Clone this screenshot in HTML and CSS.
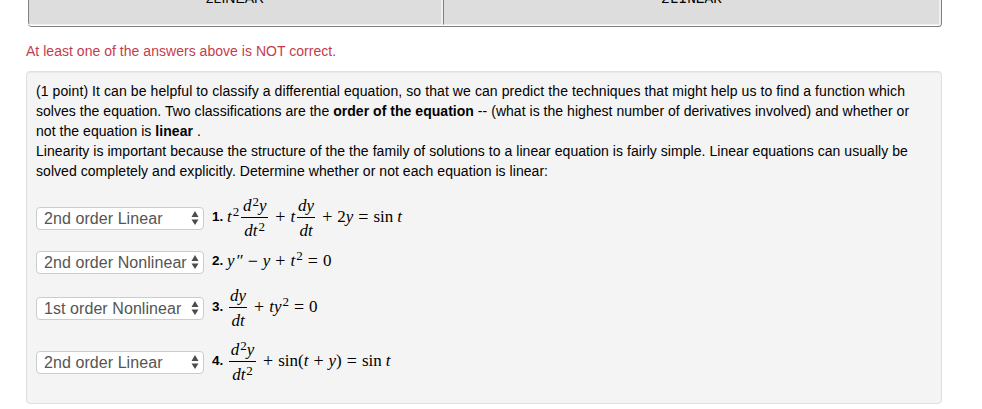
FILE: index.html
```html
<!DOCTYPE html>
<html lang="en">

<head>
    <meta charset="UTF-8">
    <meta name="viewport" content="width=device-width, initial-scale=1.0">
    <title>Classifying Differential Equations</title>
    <link rel="stylesheet" href="styles.css">
</head>

<body>
    <div class="results">
        <div class="cell entered"><span>2LINEAR</span></div>
        <div class="cell preview"><span>2LINEAR</span></div>
    </div>

    <p class="message">At least one of the answers above is NOT correct.</p>

    <div class="problem">
        <div class="text">
            <div class="line l1">(1 point) It can be helpful to classify a differential equation, so that we can predict the techniques that might help us to find a function which</div>
            <div class="line l2">solves the equation. Two classifications are the <b>order of the equation</b> -- (what is the highest number of derivatives involved) and whether or</div>
            <div class="line l3">not the equation is <b>linear</b> .</div>
            <div class="line l4">Linearity is important because the structure of the the family of solutions to a linear equation is fairly simple. Linear equations can usually be</div>
            <div class="line l5">solved completely and explicitly. Determine whether or not each equation is linear:</div>
        </div>

        <div class="question q1">
            <div class="select"><span>2nd order Linear</span><svg width="8" height="14" viewBox="0 0 8 14"><path d="M0.5 6 4 0l3.500 6zM0.500 8.500h7L4 14z" fill="#4c4c4c"/></svg></div>
            <b class="number">1.</b>
            <div class="math">
                <i>t</i><sup>2</sup>
                <span class="frac wide"><span><i>d</i><sup>2</sup><i>y</i></span><span><i>d</i><i>t</i><sup>2</sup></span></span>
                <span class="op">+</span><i>t</i>
                <span class="frac"><span><i>dy</i></span><span><i>dt</i></span></span>
                <span class="op">+</span><span>2</span><i>y</i><span class="op">=</span><span>sin</span><i class="arg">t</i>
            </div>
        </div>

        <div class="question q2">
            <div class="select"><span>2nd order Nonlinear</span><svg width="8" height="14" viewBox="0 0 8 14"><path d="M0.5 6 4 0l3.500 6zM0.500 8.500h7L4 14z" fill="#4c4c4c"/></svg></div>
            <b class="number">2.</b>
            <div class="math">
                <i>y</i><i class="prime">″</i><span class="op">−</span><i>y</i><span class="op">+</span><i>t</i><sup>2</sup><span class="op">=</span><span>0</span>
            </div>
        </div>

        <div class="question q3">
            <div class="select"><span>1st order Nonlinear</span><svg width="8" height="14" viewBox="0 0 8 14"><path d="M0.5 6 4 0l3.500 6zM0.500 8.500h7L4 14z" fill="#4c4c4c"/></svg></div>
            <b class="number">3.</b>
            <div class="math">
                <span class="frac"><span><i>dy</i></span><span><i>dt</i></span></span>
                <span class="op">+</span><i>ty</i><sup>2</sup><span class="op">=</span><span>0</span>
            </div>
        </div>

        <div class="question q4">
            <div class="select"><span>2nd order Linear</span><svg width="8" height="14" viewBox="0 0 8 14"><path d="M0.5 6 4 0l3.500 6zM0.500 8.500h7L4 14z" fill="#4c4c4c"/></svg></div>
            <b class="number">4.</b>
            <div class="math">
                <span class="frac wide"><span><i>d</i><sup>2</sup><i>y</i></span><span><i>d</i><i>t</i><sup>2</sup></span></span>
                <span class="op">+</span><span>sin(</span><i>t</i><span class="op">+</span><i>y</i><span>)</span><span class="op">=</span><span>sin</span><i class="arg">t</i>
            </div>
        </div>
    </div>
</body>

</html>
```
FILE: styles.css
```css
body {
    margin: 0;
    background: #fff;
    color: #000;
    font-family: "Liberation Sans", Arial, sans-serif;
    font-size: 14px;
    line-height: 20px;
    overflow: hidden;
}

.results {
    display: grid;
    grid-template-columns: 415px 498px;
    width: 913px;
    height: 26px;
    margin-left: 28px;
    border: 1px solid #808080;
    border-top: 0;
    border-left: 0;
    border-radius: 0 0 4px 4px;
    overflow: hidden;
}

.cell {
    display: flex;
    justify-content: center;
    box-sizing: border-box;
    height: 25px;
    background: #ddd;
    border-left: 1px solid #808080;
    border-right: 2px solid #f0f0f0;
    border-bottom: 1px solid #f0f0f0;
}

.entered {
    border-bottom-left-radius: 3px;
}

.cell span {
    margin-top: -12px;
}

.preview {
    font-family: "Liberation Mono", monospace;
    font-size: 14.5px;
}

.preview span {
    margin-top: -11px;
}

.message {
    margin: 14px 0 10px 26px;
    color: #c43c4b;
    letter-spacing: 0.03px;
}

.problem {
    box-sizing: border-box;
    width: 916px;
    height: 333px;
    margin-left: 26px;
    padding: 9px;
    background: #f4f4f4;
    border: 1px solid #e0e0e0;
    border-radius: 4px;
    box-shadow: inset 0 1px 1px rgba(0, 0, 0, 0.05);
}

.line {
    letter-spacing: 0.05px;
    white-space: nowrap;
}

.l1 {
    letter-spacing: 0.085px;
}

.l2 {
    letter-spacing: 0.035px;
}

.question {
    display: flex;
    align-items: center;
}

.q1 {
    height: 56px;
    margin-top: 9px;
}

.q2 {
    height: 32px;
}

.q3 {
    height: 60px;
}

.q4 {
    height: 48px;
}

.select {
    display: flex;
    align-items: center;
    justify-content: space-between;
    box-sizing: border-box;
    width: 168px;
    height: 23px;
    padding: 0 4px 0 7px;
    background: #fff;
    border: 1px solid #ccc;
    border-radius: 4px;
    color: #555;
    font-size: 16px;
    letter-spacing: 0.07px;
    white-space: nowrap;
}

.select span {
    padding-top: 2px;
}

.number {
    width: 12px;
    margin-left: 8px;
    margin-right: 3px;
    padding-bottom: 2px;
    font-size: 13.5px;
}

.math {
    display: flex;
    align-items: center;
    padding-bottom: 2px;
    font-family: "Liberation Serif", "Times New Roman", serif;
    font-size: 17px;
}

.math sup {
    position: relative;
    top: -5px;
    margin-left: 1px;
    font-size: 13px;
    line-height: 0;
    vertical-align: baseline;
}

.prime {
    margin-left: 1px;
}

.frac {
    display: flex;
    flex-direction: column;
    width: 18px;
    margin: 0 2px;
    text-align: center;
    white-space: nowrap;
}

.frac.wide {
    width: 27px;
}

.frac > span {
    height: 24px;
    line-height: 25px;
}

.frac > span:first-child {
    border-bottom: 1px solid #000;
}

.op {
    margin: 0 5px;
    font-size: 18px;
}

.arg {
    margin-left: 4px;
}
```
